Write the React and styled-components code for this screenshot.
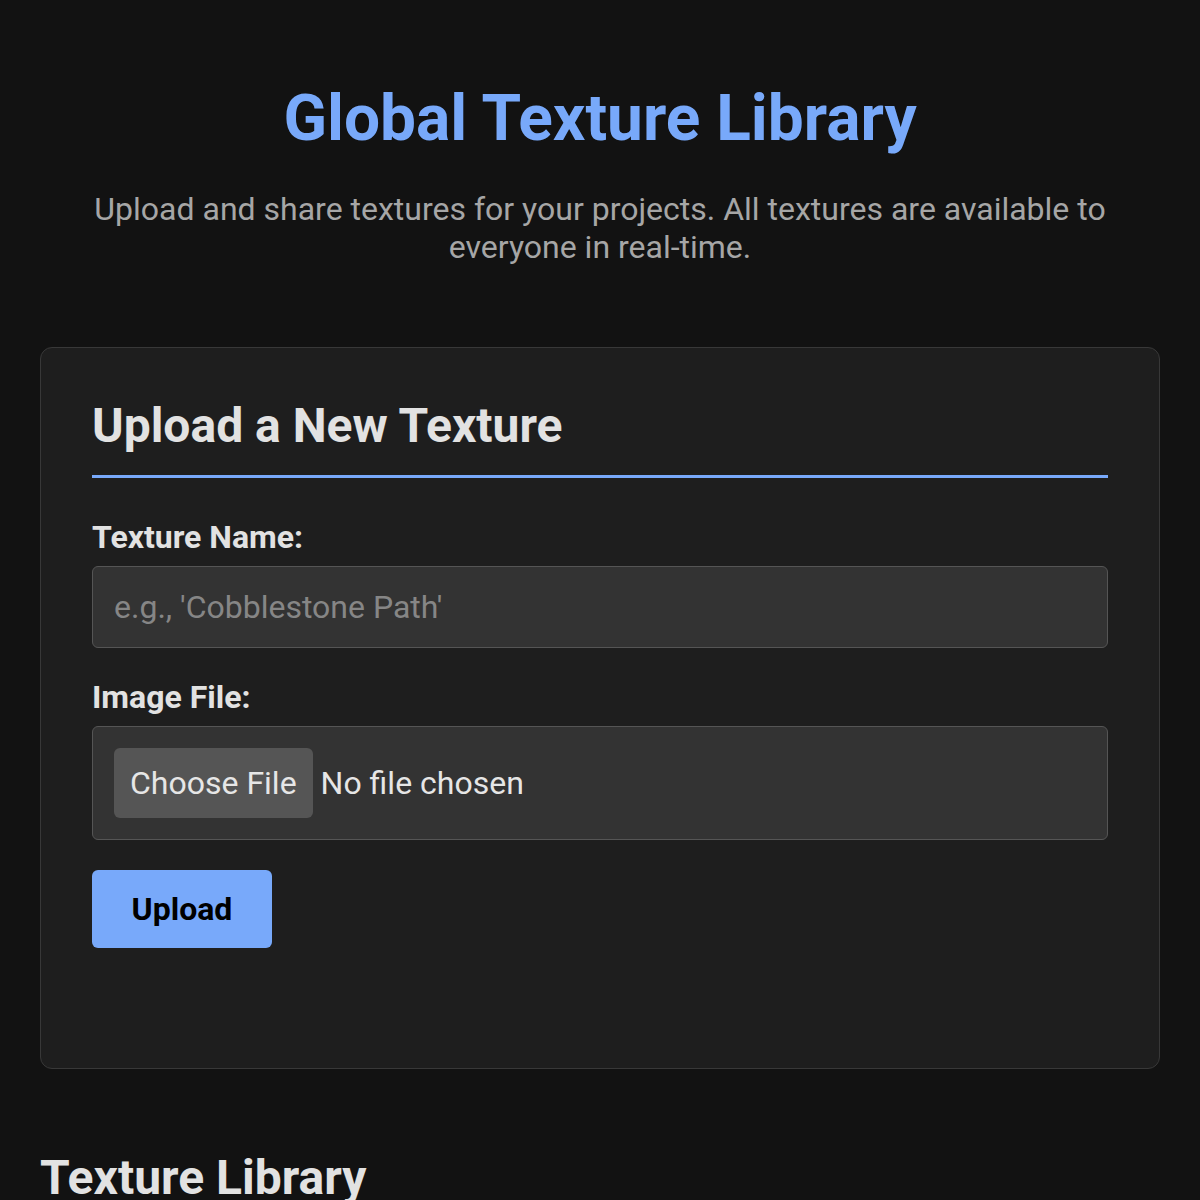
import React from 'react';
import styled, { createGlobalStyle } from 'styled-components';

const GlobalStyle = createGlobalStyle`
  html, body {
    margin: 0;
    background: #121212;
    color: #e0e0e0;
    font-family: Roboto, "Liberation Sans", sans-serif;
    font-size: 32px;
  }
  * { box-sizing: border-box; }
`;

const Page = styled.div`
  max-width: 1200px;
  margin: 0 auto;
  padding: 0 40px;
`;

const Header = styled.header`
  text-align: center;
  padding: 81px 0 80px;

  h1 {
    margin: 0;
    font-size: 64px;
    font-weight: 700;
    color: #78a9fa;
    line-height: 1.2;
  }
  p {
    max-width: 1030px;
    margin: 32px auto 0;
    font-size: 32px;
    line-height: 1.2;
    color: #a6a6a6;
  }
`;

const Card = styled.section`
  background: #1e1e1e;
  border: 1px solid #383838;
  border-radius: 12px;
  padding: 49px 51px 120px;
`;

const CardTitle = styled.h2`
  margin: 0 0 40px;
  padding-bottom: 21px;
  font-size: 48px;
  font-weight: 700;
  color: #e2e2e2;
  border-bottom: 3px solid #78a9fa;
`;

const Field = styled.div`
  display: flex;
  flex-direction: column;
  margin-bottom: 30px;
`;

const Label = styled.label`
  font-size: 32px;
  font-weight: 700;
  color: #e2e2e2;
  margin-bottom: 10px;
`;

const TextInput = styled.input`
  height: 82px;
  padding: 0 21px;
  background: #333333;
  border: 1px solid #555555;
  border-radius: 6px;
  color: #e0e0e0;
  font-family: inherit;
  font-size: 32px;
  outline: none;

  &::placeholder { color: #868686; }
`;

const FileInput = styled.input`
  height: 114px;
  padding: 21px;
  background: #333333;
  border: 1px solid #555555;
  border-radius: 6px;
  color: #e6e6e6;
  font-family: inherit;
  font-size: 32px;

  &::file-selector-button {
    height: 70px;
    margin-right: 8px;
    padding: 0 16px;
    background: #555555;
    color: #e6e6e6;
    border: none;
    border-radius: 6px;
    font-family: inherit;
    font-size: 32px;
  }
`;

const Button = styled.button`
  width: 180px;
  height: 78px;
  background: #78a9fa;
  color: #000;
  border: none;
  border-radius: 6px;
  font-family: inherit;
  font-size: 32px;
  font-weight: 700;
`;

const SectionTitle = styled.h2`
  margin: 80px 0 0;
  font-size: 48px;
  font-weight: 700;
  color: #e2e2e2;
`;

export default function App() {
  return (
    <>
      <GlobalStyle />
      <Page>
        <Header>
          <h1>Global Texture Library</h1>
          <p>Upload and share textures for your projects. All textures are available to everyone in real-time.</p>
        </Header>
        <Card>
          <CardTitle>Upload a New Texture</CardTitle>
          <form onSubmit={(e) => e.preventDefault()}>
            <Field>
              <Label htmlFor="tex-name">Texture Name:</Label>
              <TextInput id="tex-name" type="text" placeholder="e.g., 'Cobblestone Path'" />
            </Field>
            <Field>
              <Label htmlFor="tex-file">Image File:</Label>
              <FileInput id="tex-file" type="file" accept="image/*" />
            </Field>
            <Button type="submit">Upload</Button>
          </form>
        </Card>
        <SectionTitle>Texture Library</SectionTitle>
      </Page>
    </>
  );
}
